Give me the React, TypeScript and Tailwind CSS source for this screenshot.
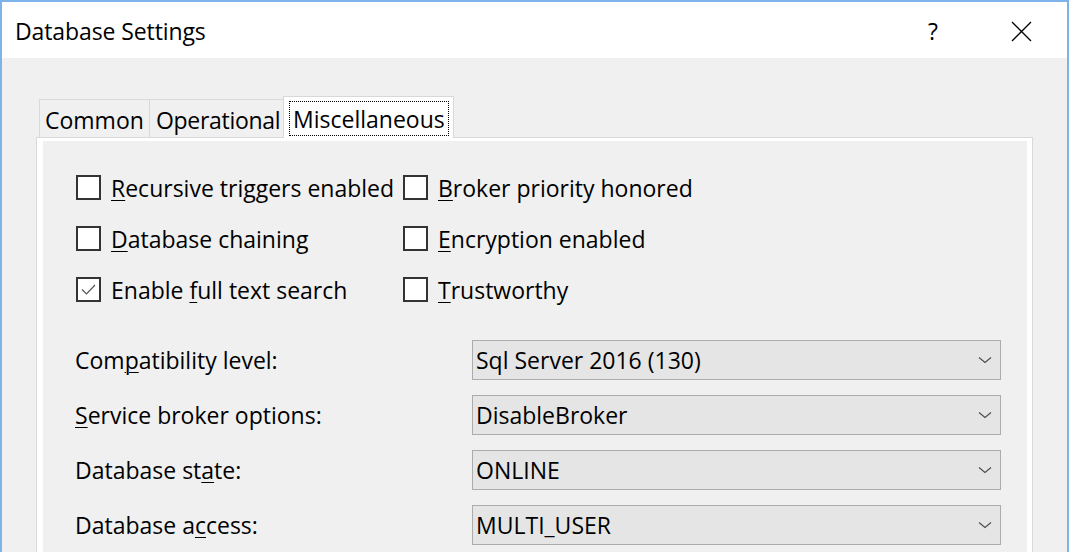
import React from "react";

const U = ({ children }: { children: React.ReactNode }) => (
  <span className="underline underline-offset-[3px] decoration-1">{children}</span>
);

function Check({ checked, children }: { checked?: boolean; children: React.ReactNode }) {
  return (
    <div className="flex items-center h-[25px]">
      <div className="w-[25px] h-[25px] border-2 border-[#333333] bg-white flex items-center justify-center shrink-0">
        {checked && (
          <svg width="19" height="19" viewBox="0 0 19 19">
            <path d="M3 9.5 L7.5 14 L16 5" fill="none" stroke="#555" strokeWidth="1.2" />
          </svg>
        )}
      </div>
      <span className="ml-[10px] whitespace-nowrap leading-[25px] pt-[2px]">{children}</span>
    </div>
  );
}

function Combo({ label, value }: { label: React.ReactNode; value: string }) {
  return (
    <div className="flex items-center h-[40px]">
      <div className="w-[397px] shrink-0 whitespace-nowrap pt-[1px] -ml-px">{label}</div>
      <div className="w-[529px] h-[40px] border border-[#acacac] bg-[#e5e5e5] flex items-center justify-between pl-[3px] pr-[8px]">
        <span className="whitespace-nowrap pt-[1px]">{value}</span>
        <svg width="14" height="8" viewBox="0 0 14 8">
          <path d="M1 1.5 L7 6.5 L13 1.5" fill="none" stroke="#4a4a4a" strokeWidth="1.1" />
        </svg>
      </div>
    </div>
  );
}

export default function App() {
  return (
    <div
      className="w-[1069px] h-[552px] overflow-hidden border-t-2 border-x-2 border-[#7db3ea] bg-[#f0f0f0] text-black text-[23px] font-['Open_Sans','Noto_Sans',sans-serif]"
    >
      <div className="h-[56px] bg-white flex items-center pl-[13px] pt-[2px] relative">
        <span className="whitespace-nowrap tracking-[-0.1px]">Database Settings</span>
        <div className="ml-auto flex items-center">
          <span className="mr-[73px] text-[23px]">?</span>
          <svg width="21" height="21" viewBox="0 0 21 21" className="mr-[35px]">
            <path d="M1 1 L20 20 M20 1 L1 20" stroke="#000" strokeWidth="1.3" fill="none" />
          </svg>
        </div>
      </div>

      <div className="pl-[34px] pt-[38px]">
        <div className="flex items-end pl-[3px]">
          <div className="h-[38px] w-[110px] border-l border-t border-[#d9d9d9] bg-[#f0f0f0] flex items-center pl-[5px] pt-[4px] whitespace-nowrap">
            Common
          </div>
          <div className="h-[38px] w-[134px] border-l border-t border-[#d9d9d9] bg-[#f0f0f0] flex items-center pl-[6px] pt-[4px] whitespace-nowrap tracking-[-0.3px]">
            Operational
          </div>
          <div className="relative z-10 -mb-px h-[42px] w-[171px] border-l border-t border-r border-[#d9d9d9] bg-white pt-[4px] pl-[5px] pr-[4px]">
            <div className="h-[35px] border border-dotted border-black flex items-center pl-[3px] pt-[1px] whitespace-nowrap">
              Miscellaneous
            </div>
          </div>
        </div>

        <div className="w-[997px] h-[420px] border border-[#d9d9d9] bg-white pt-[3px] pl-[6px] pr-[5px]">
          <div className="h-full bg-[#f0f0f0] pl-[33px] pt-[34px]">
            <div className="flex">
              <div className="w-[327px] flex flex-col gap-[26px]">
                <Check><U>R</U>ecursive triggers enabled</Check>
                <Check><U>D</U>atabase chaining</Check>
                <Check checked>Enable <U>f</U>ull text search</Check>
              </div>
              <div className="flex flex-col gap-[26px]">
                <Check><U>B</U>roker priority honored</Check>
                <Check><U>E</U>ncryption enabled</Check>
                <Check><U>T</U>rustworthy</Check>
              </div>
            </div>

            <div className="mt-[38px] flex flex-col gap-[15px]">
              <Combo label={<>Com<U>p</U>atibility level:</>} value="Sql Server 2016 (130)" />
              <Combo label={<><U>S</U>ervice broker options:</>} value="DisableBroker" />
              <Combo label={<>Database st<U>a</U>te:</>} value="ONLINE" />
              <Combo label={<>Database a<U>c</U>cess:</>} value="MULTI_USER" />
            </div>
          </div>
        </div>
      </div>
    </div>
  );
}
